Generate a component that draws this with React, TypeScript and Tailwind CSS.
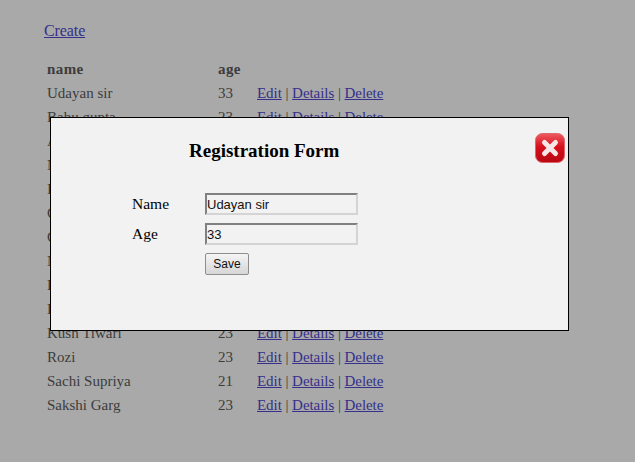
const rows = [
  { name: "Udayan sir", age: 33 },
  { name: "Babu gupta", age: 23 },
  { name: "Amit Kumar", age: 23 },
  { name: "Neha Singh", age: 23 },
  { name: "Isha Verma", age: 23 },
  { name: "Gaurav Jain", age: 23 },
  { name: "Gopal Das", age: 23 },
  { name: "Nitin Rai", age: 23 },
  { name: "Pooja Sahu", age: 23 },
  { name: "Deepak Pal", age: 23 },
  { name: "Kush Tiwari", age: 23 },
  { name: "Rozi", age: 23 },
  { name: "Sachi Supriya", age: 21 },
  { name: "Sakshi Garg", age: 23 },
];

function CloseIcon() {
  return (
    <svg width="32" height="32" viewBox="0 0 32 32">
      <defs>
        <linearGradient id="closeBg" x1="0" y1="0" x2="0" y2="1">
          <stop offset="0" stopColor="#ee5a62" />
          <stop offset="0.45" stopColor="#d8101c" />
          <stop offset="1" stopColor="#b80812" />
        </linearGradient>
      </defs>
      <rect x="1.5" y="1.5" width="29" height="29" rx="7" fill="url(#closeBg)" stroke="#e0656b" />
      <path d="M10.5 10.5 L21.5 21.5 M21.5 10.5 L10.5 21.5" stroke="#f6e6e6" strokeWidth="5" strokeLinecap="round" />
    </svg>
  );
}

export default function App() {
  return (
    <div className="relative h-[462px] w-[635px] overflow-hidden bg-[#a9a9a9] font-['Liberation_Serif',serif] text-[15px] text-[#3c3c3c]">
      <div className="pl-[44px] pt-[19px] text-[16px]">
        <a href="#" className="leading-[22px] tracking-[-0.1px] text-[#35308a] underline">Create</a>
      </div>
      <table className="ml-[44px] mt-[14px] border-collapse">
        <thead>
          <tr className="h-[24px]">
            <th className="w-[171px] px-[3px] text-left font-bold tracking-[0.4px]">name</th>
            <th className="w-[39px] px-[3px] text-left font-bold tracking-[0.4px]">age</th>
            <th />
          </tr>
        </thead>
        <tbody>
          {rows.map((row) => (
            <tr key={row.name} className="h-[24px]">
              <td className="px-[3px]">{row.name}</td>
              <td className="px-[3px]">{row.age}</td>
              <td className="pl-[3px] whitespace-nowrap tracking-[-0.06px]">
                <a href="#" className="text-[#35308a] underline">Edit</a> |{" "}
                <a href="#" className="text-[#35308a] underline">Details</a> |{" "}
                <a href="#" className="text-[#35308a] underline">Delete</a>
              </td>
            </tr>
          ))}
        </tbody>
      </table>

      <div className="absolute left-[50px] top-[117px] h-[214px] w-[519px] border border-black bg-[#f2f2f2] text-[16px] text-black">
        <h2 className="pl-[138px] pt-[21px] text-[19px] font-bold leading-[24px]">Registration Form</h2>
        <button className="absolute left-[483px] top-[14px]"><CloseIcon /></button>
        <div className="mt-[26px] pl-[81px]">
          <div className="flex h-[30px] items-center">
            <label className="w-[73px] text-[15.5px]">Name</label>
            <input
              defaultValue="Udayan sir"
              className="h-[22px] w-[153px] border-2 border-b-[#d4d4d4] border-l-[#808080] border-r-[#d4d4d4] border-t-[#808080] bg-[#f2f2f2] font-['Liberation_Sans',sans-serif] text-[13px] text-[#111]"
            />
          </div>
          <div className="flex h-[30px] items-center">
            <label className="w-[73px] text-[15.5px]">Age</label>
            <input
              defaultValue="33"
              className="h-[22px] w-[153px] border-2 border-b-[#d4d4d4] border-l-[#808080] border-r-[#d4d4d4] border-t-[#808080] bg-[#f2f2f2] font-['Liberation_Sans',sans-serif] text-[13px] text-[#111]"
            />
          </div>
          <button className="ml-[73px] mt-[4px] h-[22px] w-[44px] rounded-[2px] border border-[#8e8e8e] bg-gradient-to-b from-[#f4f4f4] to-[#d6d6d6] font-['Liberation_Sans',sans-serif] text-[12px] text-[#111]">
            Save
          </button>
        </div>
      </div>
    </div>
  );
}
